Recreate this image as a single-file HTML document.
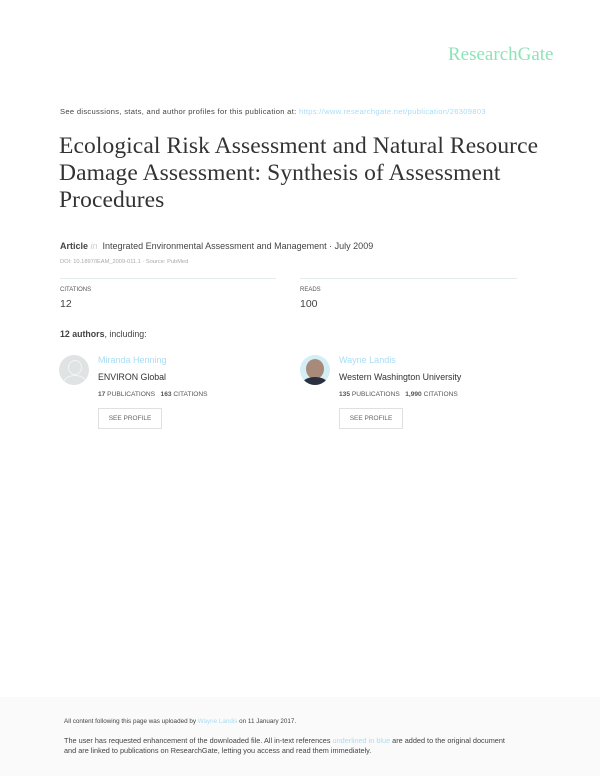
<!DOCTYPE html>
<html><head><style>
body{margin:0;width:600px;height:776px;background:#fff;font-family:"Liberation Sans",sans-serif;color:#333;position:relative;overflow:hidden}
.a{position:absolute;white-space:nowrap}
.lb{color:#a8ddf4}
.btn{position:absolute;width:62px;height:19px;border:1px solid #e0e0e0;font-size:6.5px;color:#666;text-align:center;line-height:19px}
</style></head><body>
<div class="a" style="left:448px;top:44px;font-size:19px;color:#8fe3b8;font-family:'Liberation Serif',serif">ResearchGate</div>
<div class="a" style="left:60px;top:107px;font-size:7.6px;letter-spacing:0.3px;color:#444">See discussions, stats, and author profiles for this publication at: <span class="lb">https://www.researchgate.net/publication/26309803</span></div>
<div class="a" style="left:59px;top:133px;font-size:23.5px;letter-spacing:0.1px;line-height:27px;color:#333;font-family:'Liberation Serif',serif">Ecological Risk Assessment and Natural Resource<br>Damage Assessment: Synthesis of Assessment<br>Procedures</div>
<div class="a" style="left:60px;top:241px;font-size:9px;color:#444"><b>Article</b> <span style="color:#ccc;font-style:italic">in</span>&nbsp; Integrated Environmental Assessment and Management · July 2009</div>
<div class="a" style="left:60px;top:259px;font-size:5.7px;color:#aaa">DOI: 10.1897/IEAM_2009-011.1 · Source: PubMed</div>
<div class="a" style="left:60px;top:278px;width:216px;border-top:1px solid #e3eced"></div>
<div class="a" style="left:300px;top:278px;width:217px;border-top:1px solid #e3eced"></div>
<div class="a" style="left:60px;top:287px;font-size:6px;color:#555">CITATIONS</div>
<div class="a" style="left:60px;top:298px;font-size:10.5px;color:#444">12</div>
<div class="a" style="left:300px;top:287px;font-size:6px;color:#555">READS</div>
<div class="a" style="left:300px;top:298px;font-size:10.5px;color:#444">100</div>
<div class="a" style="left:60px;top:329px;font-size:8.8px;color:#444"><b>12 authors</b>, including:</div>
<div class="a" style="left:59px;top:355px;width:30px;height:30px;border-radius:50%;background:#dfe3e4;overflow:hidden"><div style="position:absolute;left:9px;top:5px;width:12px;height:13px;border:1px solid #f4f4f4;border-radius:50%"></div><div style="position:absolute;left:4px;top:20px;width:22px;height:14px;border:1px solid #f4f4f4;border-radius:50% 50% 0 0"></div></div>
<div class="a lb" style="left:98px;top:355px;font-size:9px">Miranda Henning</div>
<div class="a" style="left:98px;top:372px;font-size:8.8px">ENVIRON Global</div>
<div class="a" style="left:98px;top:391px;font-size:6.6px;color:#555"><b>17</b> PUBLICATIONS &nbsp; <b>163</b> CITATIONS</div>
<div class="btn" style="left:98px;top:408px">SEE PROFILE</div>
<div class="a" style="left:300px;top:355px;width:30px;height:30px;border-radius:50%;background:#d4eef5;overflow:hidden"><div style="position:absolute;left:6px;top:4px;width:18px;height:20px;border-radius:50%;background:#a88a7a"></div><div style="position:absolute;left:3px;top:22px;width:24px;height:12px;border-radius:50% 50% 0 0;background:#2a3040"></div></div>
<div class="a lb" style="left:339px;top:355px;font-size:9px">Wayne Landis</div>
<div class="a" style="left:339px;top:372px;font-size:8.8px">Western Washington University</div>
<div class="a" style="left:339px;top:391px;font-size:6.6px;color:#555"><b>135</b> PUBLICATIONS &nbsp; <b>1,990</b> CITATIONS</div>
<div class="btn" style="left:339px;top:408px">SEE PROFILE</div>
<div class="a" style="left:0;top:697px;width:600px;height:79px;background:#fafafa"></div>
<div class="a" style="left:64px;top:718px;font-size:6.3px;color:#444">All content following this page was uploaded by <span class="lb">Wayne Landis</span> on 11 January 2017.</div>
<div class="a" style="left:64px;top:736px;font-size:7.3px;line-height:10px;color:#444">The user has requested enhancement of the downloaded file. All in-text references <span class="lb">underlined in blue</span> are added to the original document<br>and are linked to publications on ResearchGate, letting you access and read them immediately.</div>
</body></html>
